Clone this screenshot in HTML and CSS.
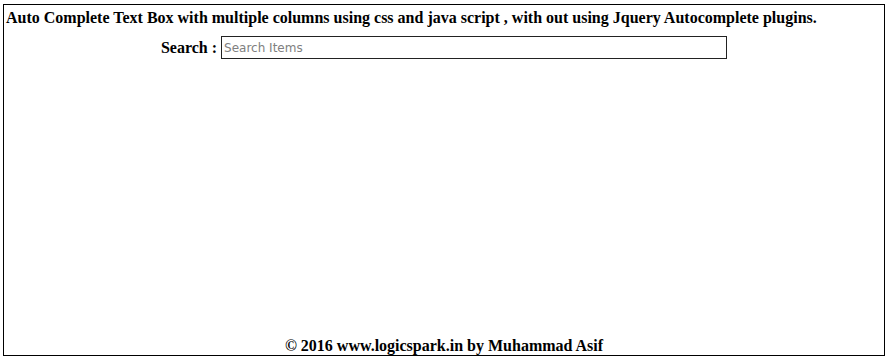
FILE: index.html
```html
<!DOCTYPE html>
<html>
<head>
<meta charset="utf-8">
<link rel="stylesheet" href="styles.css">
</head>
<body>
<div class="page">
  <div class="title">Auto Complete Text Box with multiple columns using css and java script , with out using Jquery Autocomplete plugins.</div>
  <div class="search-row">
    <label class="search-label">Search :</label>
    <input class="search-input" type="text" placeholder="Search Items">
  </div>
  <div class="footer">© 2016 www.logicspark.in by Muhammad Asif</div>
</div>
</body>
</html>
```
FILE: styles.css
```css
html, body {
  margin: 0;
  padding: 0;
  background: #fff;
}
.page {
  margin: 4px 0 0 3px;
  width: 882px;
  height: 352px;
  box-sizing: border-box;
  border: 1px solid #000;
  display: flex;
  flex-direction: column;
  font-family: "Liberation Serif", "Times New Roman", serif;
  color: #000;
}
.title {
  font-weight: bold;
  font-size: 16px;
  line-height: 18px;
  padding: 4px 0 0 2px;
}
.search-row {
  display: flex;
  justify-content: center;
  align-items: center;
  gap: 4px;
  margin-top: 9px;
}
.search-label {
  font-weight: bold;
  font-size: 16px;
}
.search-input {
  width: 506px;
  height: 23px;
  box-sizing: border-box;
  border: 1px solid #222;
  padding: 0 2px;
  margin: 0;
  font-family: "DejaVu Sans", Verdana, sans-serif;
  font-size: 12px;
  outline: none;
}
.search-input::placeholder {
  color: #808080;
}
.footer {
  margin-top: auto;
  text-align: center;
  font-weight: bold;
  font-size: 16px;
  line-height: 18px;
  padding-bottom: 0;
}
```
